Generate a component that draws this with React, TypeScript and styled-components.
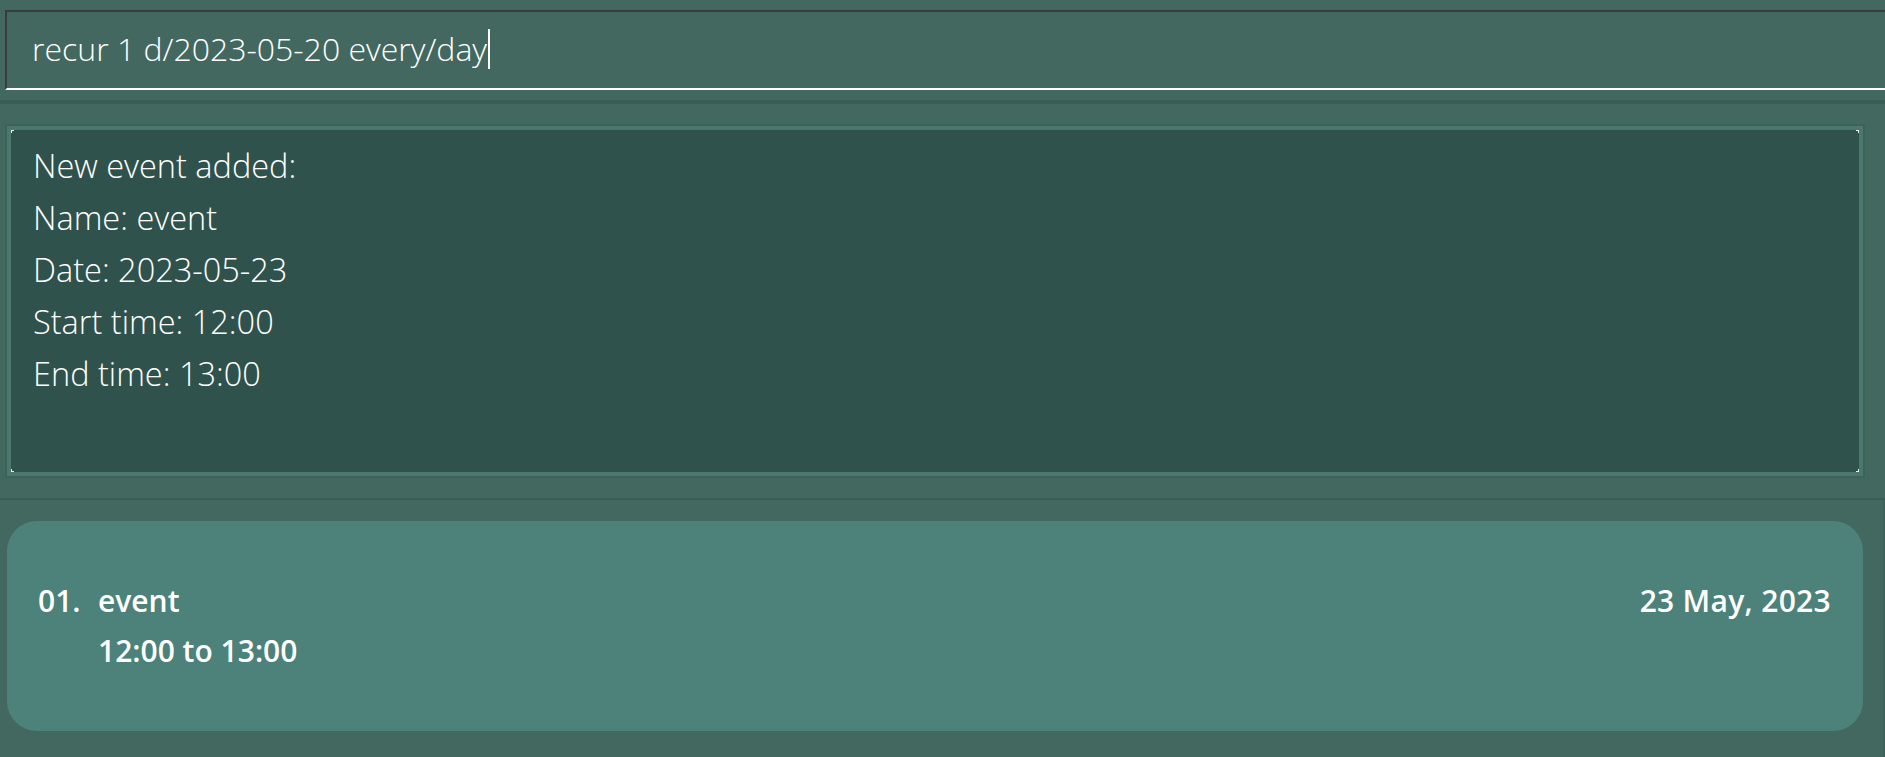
import React from "react";
import styled, { createGlobalStyle } from "styled-components";

const GlobalStyle = createGlobalStyle`
  html, body {
    margin: 0;
    padding: 0;
    background: #436860;
    overflow: hidden;
  }
  * { box-sizing: border-box; }
`;

const Page = styled.div`
  width: 1885px;
  height: 757px;
  background: #436860;
  display: flex;
  flex-direction: column;
  font-family: "Open Sans", "Noto Sans", sans-serif;
  color: #ffffff;
`;

const CommandArea = styled.div`
  padding: 10px 0 0 5px;
`;

const CommandBox = styled.div`
  height: 80px;
  border-top: 2px solid #383c3a;
  border-left: 2px solid #383c3a;
  border-bottom: 2px solid #ffffff;
  display: flex;
  align-items: center;
  padding-left: 25px;
  padding-bottom: 3px;
  font-size: 32px;
  font-weight: 300;
`;

const Caret = styled.span`
  display: inline-block;
  width: 2px;
  height: 40px;
  background: #ffffff;
  margin-left: 1px;
  vertical-align: middle;
`;

const Divider = styled.div<{ $h: number; $top: number }>`
  height: ${(p) => p.$h}px;
  margin-top: ${(p) => p.$top}px;
  background: #3a5d55;
`;

const ResultArea = styled.div`
  padding: 20px 20px 0 5px;
`;

const ResultFrame = styled.div`
  height: 354px;
  border: 2px solid #3d625a;
  background: #4c776e;
  padding: 4px;
`;

const ResultText = styled.div`
  position: relative;
  height: 100%;
  background: #2f524c;
  padding: 10px 22px;
  font-size: 32.5px;
  font-weight: 300;
  line-height: 52px;
`;

const Corner = styled.span<{ $pos: "tl" | "tr" | "bl" | "br" }>`
  position: absolute;
  width: 3px;
  height: 3px;
  border-color: #e8efee;
  border-style: solid;
  border-width: 0;
  ${(p) => (p.$pos.includes("t") ? "top: 0; border-top-width: 1px;" : "bottom: 0; border-bottom-width: 1px;")}
  ${(p) => (p.$pos.includes("l") ? "left: 0; border-left-width: 1px;" : "right: 0; border-right-width: 1px;")}
`;

const Line = styled.div``;

const ListPanel = styled.div`
  flex: 1;
  padding: 21px 20px 0 7px;
  border-right: 2px solid #3d625a;
`;

const Card = styled.div`
  height: 210px;
  background: #4c8279;
  border-radius: 30px;
  display: flex;
  align-items: center;
  padding: 0 32px 0 31px;
  font-size: 30px;
  font-weight: 600;
  line-height: 50px;
`;

const Index = styled.div`
  width: 60px;
  align-self: center;
  margin-top: -50px;
`;

const Details = styled.div`
  flex: 1;
  display: flex;
  flex-direction: column;
`;

const DateText = styled.div`
  align-self: center;
  margin-top: -50px;
  letter-spacing: 0.3px;
`;

export default function App() {
  return (
    <>
      <GlobalStyle />
      <Page>
        <CommandArea>
          <CommandBox>
            <span>recur 1 d/2023-05-20 every/day</span>
            <Caret />
          </CommandBox>
        </CommandArea>
        <Divider $h={4} $top={10} />
        <ResultArea>
          <ResultFrame>
            <ResultText>
              <Corner $pos="tl" />
              <Corner $pos="tr" />
              <Corner $pos="bl" />
              <Corner $pos="br" />
              <Line>New event added:</Line>
              <Line>Name: event</Line>
              <Line>Date: 2023-05-23</Line>
              <Line>Start time: 12:00</Line>
              <Line>End time: 13:00</Line>
            </ResultText>
          </ResultFrame>
        </ResultArea>
        <Divider $h={2} $top={20} />
        <ListPanel>
          <Card>
            <Index>01.</Index>
            <Details>
              <Line>event</Line>
              <Line>12:00 to 13:00</Line>
            </Details>
            <DateText>23 May, 2023</DateText>
          </Card>
        </ListPanel>
      </Page>
    </>
  );
}
